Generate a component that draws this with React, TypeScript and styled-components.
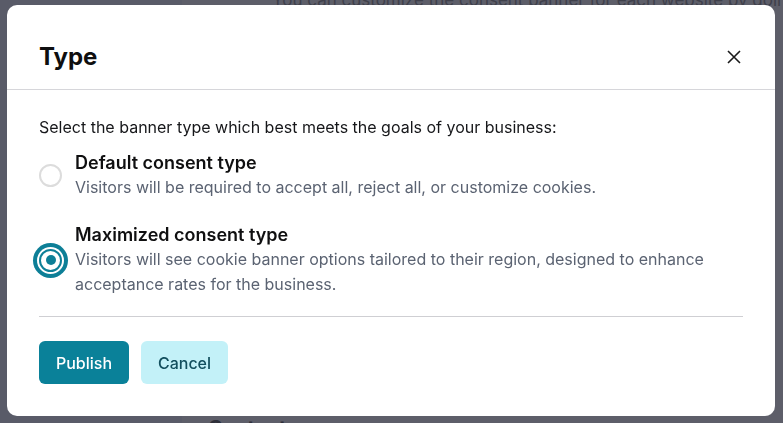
import React, { useState } from "react";
import styled, { createGlobalStyle } from "styled-components";

const Global = createGlobalStyle`
  html, body { margin: 0; padding: 0; }
  body {
    width: 783px; height: 423px; overflow: hidden;
    background: #5d5e69;
    font-family: Inter, "Noto Sans", sans-serif;
    -webkit-font-smoothing: antialiased;
  }
  * { box-sizing: border-box; }
`;

const Page = styled.div`
  display: flex;
  width: 783px;
  height: 423px;
  overflow: hidden;
`;

const Sidebar = styled.aside`
  width: 182px;
  flex: none;
  background: #595b68;
`;

const Main = styled.main`
  flex: 1;
  display: flex;
  flex-direction: column;
  justify-content: space-between;
  padding: 0 0 0 26px;
`;

const BgText = styled.p`
  margin: -14px 0 0 64px;
  font-size: 17px;
  line-height: 28px;
  color: #3f404b;
  white-space: nowrap;
`;

const BgHeading = styled.h2`
  margin: 0 0 -17px 0;
  font-size: 20px;
  font-weight: 700;
  color: #2e2f39;
  line-height: 24px;
`;

const Modal = styled.div`
  position: fixed;
  left: 7px;
  top: 5px;
  width: 768px;
  height: 411px;
  background: #fff;
  border-radius: 10px;
  display: flex;
  flex-direction: column;
`;

const Header = styled.div`
  display: flex;
  align-items: center;
  justify-content: space-between;
  padding: 39px 34px 19px 32px;
  border-bottom: 1px solid #d6d6da;
`;

const Title = styled.h1`
  margin: 0;
  font-size: 24px;
  line-height: 26px;
  font-weight: 700;
  color: #0f0f10;
`;

const CloseButton = styled.button`
  border: 0;
  background: none;
  padding: 0;
  width: 14px;
  height: 14px;
  display: flex;
  cursor: pointer;
  color: #1a1a1a;
`;

const Body = styled.div`
  padding: 26px 32px 32px 32px;
  display: flex;
  flex-direction: column;
`;

const Lead = styled.p`
  margin: 0;
  font-size: 16px;
  line-height: 22px;
  color: #16171a;
`;

const Options = styled.div`
  display: flex;
  flex-direction: column;
  gap: 23px;
  margin-top: 13px;
`;

const Option = styled.label`
  display: flex;
  align-items: center;
  gap: 13px;
  cursor: pointer;
`;

const Radio = styled.span<{ $checked: boolean }>`
  flex: none;
  width: 23px;
  height: 23px;
  border-radius: 50%;
  background: #fff;
  display: flex;
  align-items: center;
  justify-content: center;
  border: 2px solid ${(p) => (p.$checked ? "#0d7f97" : "#dcdcdc")};
  box-shadow: ${(p) =>
    p.$checked ? "0 0 0 2px #fff, 0 0 0 6px #0d7f97" : "none"};
  &::after {
    content: "";
    width: 10px;
    height: 10px;
    border-radius: 50%;
    background: #0d7f97;
    display: ${(p) => (p.$checked ? "block" : "none")};
  }
`;

const OptionText = styled.div`
  display: flex;
  flex-direction: column;
`;

const OptionTitle = styled.span`
  font-size: 18px;
  line-height: 24px;
  font-weight: 600;
  color: #0f0f10;
`;

const OptionDesc = styled.span`
  font-size: 16px;
  line-height: 25px;
  color: #5b6372;
  max-width: 650px;
`;

const Divider = styled.hr`
  margin: 19px 0 0 0;
  border: 0;
  border-top: 1px solid #cfcfd3;
  height: 0;
`;

const Actions = styled.div`
  display: flex;
  gap: 12px;
  margin-top: 24px;
`;

const Button = styled.button<{ $primary?: boolean }>`
  height: 43px;
  padding: 0 16px;
  border: 0;
  border-radius: 6px;
  font-family: Inter, "Noto Sans", sans-serif;
  font-size: 16px;
  font-weight: 500;
  cursor: pointer;
  background: ${(p) => (p.$primary ? "#0a8199" : "#c3f1f8")};
  color: ${(p) => (p.$primary ? "#ffffff" : "#124f5e")};
  min-width: ${(p) => (p.$primary ? "90px" : "87px")};
`;

const options = [
  {
    id: "default",
    title: "Default consent type",
    desc: "Visitors will be required to accept all, reject all, or customize cookies.",
  },
  {
    id: "max",
    title: "Maximized consent type",
    desc: "Visitors will see cookie banner options tailored to their region, designed to enhance acceptance rates for the business.",
  },
];

export default function App() {
  const [selected, setSelected] = useState("max");
  return (
    <>
      <Global />
      <Page>
        <Sidebar />
        <Main>
          <BgText>You can customize the consent banner for each website by going to</BgText>
          <BgHeading>Content</BgHeading>
        </Main>
      </Page>
      <Modal role="dialog">
        <Header>
          <Title>Type</Title>
          <CloseButton aria-label="Close">
            <svg width="14" height="14" viewBox="0 0 14 14" fill="none">
              <path d="M1 1L13 13M13 1L1 13" stroke="currentColor" strokeWidth="1.6" />
            </svg>
          </CloseButton>
        </Header>
        <Body>
          <Lead>Select the banner type which best meets the goals of your business:</Lead>
          <Options>
            {options.map((o) => (
              <Option key={o.id} onClick={() => setSelected(o.id)}>
                <Radio $checked={selected === o.id} />
                <OptionText>
                  <OptionTitle>{o.title}</OptionTitle>
                  <OptionDesc>{o.desc}</OptionDesc>
                </OptionText>
              </Option>
            ))}
          </Options>
          <Divider />
          <Actions>
            <Button $primary>Publish</Button>
            <Button>Cancel</Button>
          </Actions>
        </Body>
      </Modal>
    </>
  );
}
